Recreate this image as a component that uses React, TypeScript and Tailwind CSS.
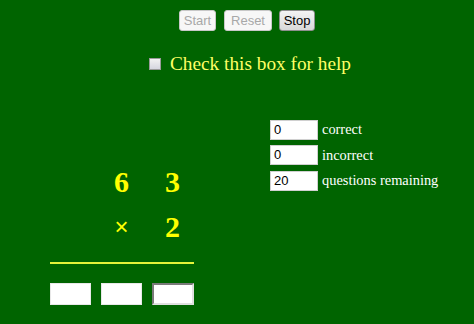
import React from 'react';

const serif = { fontFamily: '"Liberation Serif", "Times New Roman", serif' };

export default function App() {
  return (
    <div className="w-[474px] h-[324px] bg-[#006400] overflow-hidden font-['Liberation_Serif',serif]">
      {/* Controls */}
      <div className="flex gap-[8px] pl-[179px] pt-[10px] font-['Liberation_Sans',Arial,sans-serif] text-[13px]">
        <button disabled className="w-[37px] h-[21px] rounded-[3px] border border-[#c8c8c8] bg-[#f7f7f7] text-[#a8a8a8]">Start</button>
        <button disabled className="w-[48px] h-[21px] rounded-[3px] border border-[#c8c8c8] bg-[#f7f7f7] text-[#a8a8a8]">Reset</button>
        <button className="w-[36px] h-[21px] ml-[-1px] rounded-[3px] border border-[#8f8f8f] bg-gradient-to-b from-[#f4f4f4] to-[#d8d8d8] text-black">Stop</button>
      </div>

      {/* Help toggle */}
      <label className="flex items-center pl-[149px] mt-[20px] h-[25px]">
        <span className="w-[12px] h-[12px] border border-[#9a9a9a] bg-gradient-to-b from-[#f2f2f2] to-[#d6d6e0]" />
        <span className="ml-[9px] text-[19.3px] leading-[25px] text-[#ffff66]">Check this box for help</span>
      </label>

      <div className="flex items-start pl-[50px] mt-[43px]">
        {/* Problem */}
        <div className="w-[144px] pt-[48px]">
          <div className="grid grid-cols-[41px_41px_41px] gap-x-[10px] text-[30px] leading-[30px] font-bold text-[#ffff00]">
            <span />
            <span className="text-center">6</span>
            <span className="text-center">3</span>
          </div>
          <div className="grid grid-cols-[41px_41px_41px] gap-x-[10px] mt-[15px] text-[30px] leading-[30px] font-bold text-[#ffff00]">
            <span />
            <span className="text-center font-normal font-['Liberation_Sans',sans-serif] text-[24px]">×</span>
            <span className="text-center">2</span>
          </div>
          <div className="h-[2px] bg-[#e4f43a] mt-[20px]" />
          <div className="flex gap-[10px] mt-[19px]">
            <div className="w-[41px] h-[22px] bg-white border border-[#e8e8e8]" />
            <div className="w-[41px] h-[22px] bg-white border border-[#e8e8e8]" />
            <div className="w-[42px] h-[22px] bg-white border-2 border-t-[#7a7a7a] border-l-[#7a7a7a] border-r-[#e0e0e0] border-b-[#e0e0e0]" />
          </div>
        </div>

        {/* Score */}
        <div className="ml-[76px] flex flex-col gap-[4px]">
          {[
            ['0', 'correct'],
            ['0', 'incorrect'],
            ['20', 'questions remaining'],
          ].map(([v, label]) => (
            <div key={label} className="flex items-center">
              <div className="w-[48px] h-[20px] bg-white border border-[#d0d0d0] pl-[3px] text-[13px] leading-[18px] text-black font-['Liberation_Sans',Arial,sans-serif]">
                {v}
              </div>
              <span className="ml-[4px] text-[14.4px] text-white" style={serif}>{label}</span>
            </div>
          ))}
        </div>
      </div>
    </div>
  );
}
